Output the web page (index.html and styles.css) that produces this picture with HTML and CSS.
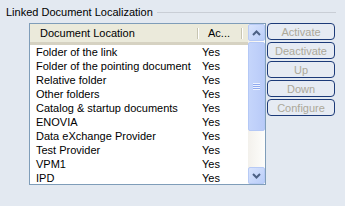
FILE: index.html
```html
<!DOCTYPE html>
<html lang="en">
<head>
  <meta charset="UTF-8">
  <title>Linked Document Localization</title>
  <link rel="stylesheet" href="styles.css">
</head>
<body>
  <div class="group">
    <div class="group-title">
      <span>Linked Document Localization</span>
      <div class="group-line"></div>
    </div>
    <div class="group-body">
      <div class="listbox">
        <div class="list">
          <div class="list-header">
            <div class="col-loc">Document Location</div>
            <div class="col-act">Ac...</div>
            <div class="col-rest"></div>
          </div>
          <div class="row"><div class="col-loc">Folder of the link</div><div class="col-act">Yes</div></div>
          <div class="row"><div class="col-loc">Folder of the pointing document</div><div class="col-act">Yes</div></div>
          <div class="row"><div class="col-loc">Relative folder</div><div class="col-act">Yes</div></div>
          <div class="row"><div class="col-loc">Other folders</div><div class="col-act">Yes</div></div>
          <div class="row"><div class="col-loc">Catalog &amp; startup documents</div><div class="col-act">Yes</div></div>
          <div class="row"><div class="col-loc">ENOVIA</div><div class="col-act">Yes</div></div>
          <div class="row"><div class="col-loc">Data eXchange Provider</div><div class="col-act">Yes</div></div>
          <div class="row"><div class="col-loc">Test Provider</div><div class="col-act">Yes</div></div>
          <div class="row"><div class="col-loc">VPM1</div><div class="col-act">Yes</div></div>
          <div class="row"><div class="col-loc">IPD</div><div class="col-act">Yes</div></div>
        </div>
        <div class="scrollbar">
          <div class="sb-btn">
            <svg width="9" height="6" viewBox="0 0 9 6"><path d="M1 5 L4.5 1.5 L8 5" fill="none" stroke="#4d6185" stroke-width="2"/></svg>
          </div>
          <div class="sb-thumb">
            <div class="grip"></div>
          </div>
          <div class="sb-track"></div>
          <div class="sb-btn">
            <svg width="9" height="6" viewBox="0 0 9 6"><path d="M1 1 L4.5 4.5 L8 1" fill="none" stroke="#4d6185" stroke-width="2"/></svg>
          </div>
        </div>
      </div>
      <div class="buttons">
        <button class="btn" disabled>Activate</button>
        <button class="btn" disabled>Deactivate</button>
        <button class="btn" disabled>Up</button>
        <button class="btn" disabled>Down</button>
        <button class="btn" disabled>Configure</button>
      </div>
    </div>
  </div>
</body>
</html>
```

FILE: styles.css
```css
body {
  margin: 0;
  background: #e3e9f1;
  font-family: 'Liberation Sans', Arial, sans-serif;
  font-size: 11px;
  color: #000;
}
.group {
  width: 345px;
  height: 206px;
}
.group-title {
  display: flex;
  align-items: center;
  padding: 5px 9px 0 6px;
  height: 13px;
}
.group-title span {
  color: #000;
}
.group-line {
  flex: 1;
  margin-left: 4px;
  margin-top: 1px;
  border-top: 1px solid #c9ced6;
}
.group-body {
  display: flex;
  align-items: flex-start;
  padding: 5px 0 0 29px;
}
.listbox {
  display: flex;
  width: 235px;
  height: 160px;
  border: 1px solid #7f9db9;
  background: #fff;
}
.list {
  flex: 1;
  overflow: hidden;
}
.list-header {
  display: flex;
  height: 18px;
  line-height: 18px;
  background: #ebeadb;
  border-bottom: 3px solid #d6d2c2;
}
.list-header .col-loc,
.list-header .col-act {
  position: relative;
  padding-left: 10px;
}
.list-header .col-act {
  padding-left: 9px;
}
.list-header .col-loc::after,
.list-header .col-act::after {
  content: "";
  position: absolute;
  right: 0;
  top: 4px;
  height: 11px;
  border-left: 1px solid #c7c5b2;
  border-right: 1px solid #fff;
}
.col-loc {
  width: 159px;
  padding-left: 6px;
  white-space: nowrap;
  overflow: hidden;
}
.col-act {
  width: 35px;
  padding-left: 7px;
  white-space: nowrap;
}
.col-rest {
  flex: 1;
}
.row {
  display: flex;
  height: 14px;
  line-height: 14px;
}
.scrollbar {
  width: 17px;
  display: flex;
  flex-direction: column;
  background: linear-gradient(90deg, #f3f1ec, #fdfdfb);
}
.sb-btn {
  height: 15px;
  border: 1px solid #b7caf5;
  border-radius: 2px;
  background: linear-gradient(135deg, #d9e4fd, #b9cdf9);
  display: flex;
  align-items: center;
  justify-content: center;
}
.sb-thumb {
  height: 87px;
  margin-top: 1px;
  border: 1px solid #b4c8f6;
  border-radius: 2px;
  background: linear-gradient(90deg, #c5d5fb, #b9cbf8);
  display: flex;
  align-items: center;
  justify-content: center;
}
.grip {
  width: 7px;
  height: 7px;
  background: repeating-linear-gradient(180deg, #eef3fe 0, #eef3fe 1px, #8faaf0 1px, #8faaf0 2px);
}
.sb-track {
  flex: 1;
}
.buttons {
  display: flex;
  flex-direction: column;
  gap: 2px;
  margin-left: 1px;
}
.btn {
  width: 68px;
  height: 17px;
  padding: 0;
  border: 1px solid #1c3a78;
  border-radius: 4px;
  background: #e6ebf3;
  font-family: 'Liberation Sans', Arial, sans-serif;
  font-size: 11px;
  color: #aca899;
}
```
